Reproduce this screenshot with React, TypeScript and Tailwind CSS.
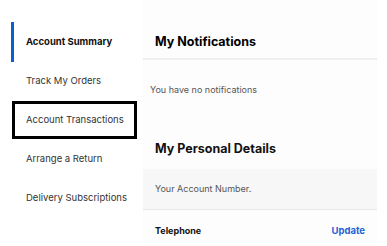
export default function App() {
  return (
    <div className="w-[387px] h-[246px] bg-white overflow-hidden flex font-['Inter',sans-serif] text-[#222]">
      <nav className="w-[143px] shrink-0 pt-[22px]">
        <ul className="list-none m-0 p-0 ml-[11px] w-[126px]">
          <li className="h-[40px] border-l-[3px] border-[#0b5fcf] pl-[12px] flex items-center text-[9.5px] font-bold text-[#111]">
            Account Summary
          </li>
          <li className="h-[39px] pl-[15px] flex items-center text-[9.5px] text-[#333]">
            Track My Orders
          </li>
          <li className="h-[38px] ml-[1px] border-[3px] border-black pl-[11px] flex items-center text-[9.5px] text-[#333]">
            Account Transactions
          </li>
          <li className="h-[40px] pl-[15px] flex items-center text-[9.5px] text-[#333]">
            Arrange a Return
          </li>
          <li className="h-[39px] pl-[15px] flex items-center text-[9.5px] text-[#333]">
            Delivery Subscriptions
          </li>
        </ul>
      </nav>
      <main className="w-[234px] shrink-0 bg-[#fdfdfd] pt-[22px]">
        <section>
          <h2 className="h-[38px] pt-[4px] px-[12px] flex items-center text-[12.5px] font-bold text-black border-b-2 border-[#efefef]">
            My Notifications
          </h2>
          <p className="h-[60px] px-[7px] flex items-center text-[9px] text-[#555]">
            You have no notifications
          </p>
        </section>
        <section>
          <h2 className="h-[49px] pt-[10px] px-[12px] flex items-center text-[12.5px] font-bold text-[#111]">
            My Personal Details
          </h2>
          <div className="h-[41px] px-[12px] flex items-center bg-[#f7f7f7] border-b border-[#e8e8e8] text-[9px] text-[#555]">
            Your Account Number.
          </div>
          <div className="h-[40px] pt-[2px] px-[12px] flex items-center justify-between text-[9px] font-bold">
            <span className="text-[#111]">Telephone</span>
            <a href="#" className="text-[9.5px] text-[#1f63d6]">Update</a>
          </div>
        </section>
      </main>
    </div>
  );
}
